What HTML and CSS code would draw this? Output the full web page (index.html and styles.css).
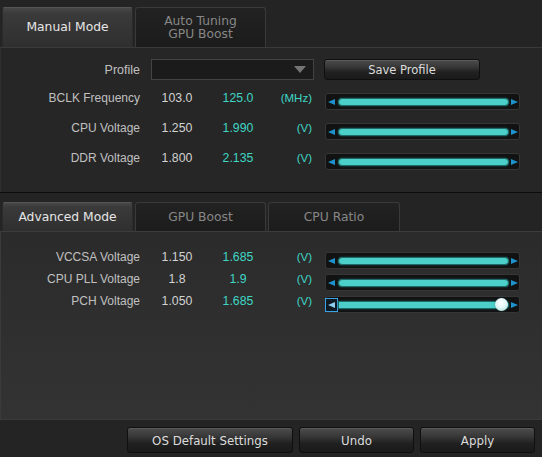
FILE: index.html
```html
<!DOCTYPE html>
<html>
<head>
<meta charset="utf-8">
<link rel="stylesheet" href="styles.css">
</head>
<body>
<div class="app">
  <div class="tabs tabs-top">
    <div class="tab tab-big active">Manual Mode</div>
    <div class="tab tab-big two">Auto Tuning<br>GPU Boost</div>
  </div>

  <div class="panel-top">
    <div class="profile-row">
      <div class="label">Profile</div>
      <div class="dropdown"><span class="caret"></span></div>
      <div class="btn btn-save">Save Profile</div>
    </div>

    <div class="row">
      <div class="label">BCLK Frequency</div>
      <div class="val">103.0</div>
      <div class="val teal">125.0</div>
      <div class="unit">(MHz)</div>
      <div class="slider"><span class="arr-l"></span><span class="track"></span><span class="arr-r"></span></div>
    </div>
    <div class="row">
      <div class="label">CPU Voltage</div>
      <div class="val">1.250</div>
      <div class="val teal">1.990</div>
      <div class="unit">(V)</div>
      <div class="slider"><span class="arr-l"></span><span class="track"></span><span class="arr-r"></span></div>
    </div>
    <div class="row">
      <div class="label">DDR Voltage</div>
      <div class="val">1.800</div>
      <div class="val teal">2.135</div>
      <div class="unit">(V)</div>
      <div class="slider"><span class="arr-l"></span><span class="track"></span><span class="arr-r"></span></div>
    </div>
  </div>

  <div class="divider"></div>

  <div class="tabs tabs-bottom">
    <div class="tab tab-small active">Advanced Mode</div>
    <div class="tab tab-small">GPU Boost</div>
    <div class="tab tab-small wide">CPU Ratio</div>
  </div>

  <div class="panel-bottom">
    <div class="row row-sm">
      <div class="label">VCCSA Voltage</div>
      <div class="val">1.150</div>
      <div class="val teal">1.685</div>
      <div class="unit">(V)</div>
      <div class="slider"><span class="arr-l"></span><span class="track"></span><span class="arr-r"></span></div>
    </div>
    <div class="row row-sm">
      <div class="label">CPU PLL Voltage</div>
      <div class="val">1.8</div>
      <div class="val teal">1.9</div>
      <div class="unit">(V)</div>
      <div class="slider"><span class="arr-l"></span><span class="track"></span><span class="arr-r"></span></div>
    </div>
    <div class="row row-sm">
      <div class="label">PCH Voltage</div>
      <div class="val">1.050</div>
      <div class="val teal">1.685</div>
      <div class="unit">(V)</div>
      <div class="slider focused"><span class="arr-box"><span class="arr-l light"></span></span><span class="track"><span class="thumb"></span></span><span class="arr-r"></span></div>
    </div>
  </div>

  <div class="footer">
    <div class="btn btn-foot btn-os">OS Default Settings</div>
    <div class="btn btn-foot">Undo</div>
    <div class="btn btn-foot">Apply</div>
  </div>
</div>
</body>
</html>
```

FILE: styles.css
```css
* { box-sizing: border-box; }
html, body { margin: 0; padding: 0; }
body {
  width: 542px;
  height: 457px;
  background: #242424;
  overflow: hidden;
  font-family: "Liberation Sans", Arial, sans-serif;
  font-size: 12px;
}
.app { width: 542px; height: 457px; display: flex; flex-direction: column; }

/* tabs */
.tabs { display: flex; gap: 2px; flex: none; }
.tabs-top { padding: 7px 0 0 2px; height: 47px; }
.tabs-bottom { padding: 9px 0 0 2px; height: 38px; }
.tab {
  width: 131px;
  display: flex;
  align-items: center;
  justify-content: center;
  text-align: center;
  font-family: "DejaVu Sans", Verdana, sans-serif;
  color: #878787;
  background: linear-gradient(#222 0%, #1c1c1c 100%);
  border: 1px solid #3a3a3a;
  border-bottom: none;
  border-radius: 3px 3px 0 0;
}
.tab-big { height: 40px; font-size: 12.3px; line-height: 13px; }
.tab-small { height: 29px; font-size: 12.3px; }
.tab.wide { width: 132px; }
.tab.active {
  color: #e6e6e6;
  background: linear-gradient(#474747 0%, #3a3a3a 15%, #2f2f2f 100%);
  border-color: #555 #2a2a2a transparent #2a2a2a;
}

/* panels */
.panel-top {
  flex: none;
  height: 145px;
  border-top: 1px solid #3a3a3a;
  border-left: 1px solid #2e2e2e;
  background: #262626;
  padding-top: 11px;
}
.divider { height: 1px; flex: none; background: #0c0c0c; }
.panel-bottom {
  flex: none;
  height: 189px;
  border-top: 1px solid #3c3c3c;
  border-bottom: 1px solid #3a3a3a;
  border-left: 1px solid #3a3a3a;
  background: linear-gradient(#2b2b2b, #333333);
  padding-top: 17px;
}

/* profile row */
.profile-row { display: flex; align-items: center; height: 21px; margin-bottom: 10px; }
.label {
  width: 139px;
  flex: none;
  text-align: right;
  color: #c0c0c0;
  line-height: 16px;
}
.profile-row .label { font-size: 12.5px; }
.dropdown {
  margin-left: 11px;
  width: 163px;
  height: 21px;
  background: #1b1b1b;
  border: 1px solid #434343;
  display: flex;
  justify-content: flex-end;
  align-items: center;
  padding-right: 7px;
}
.caret {
  width: 0; height: 0;
  border-left: 6px solid transparent;
  border-right: 6px solid transparent;
  border-top: 7px solid #747474;
}

.btn {
  display: flex;
  align-items: center;
  justify-content: center;
  font-family: "DejaVu Sans", Verdana, sans-serif;
  font-size: 11.5px;
  color: #dcdcdc;
  background: linear-gradient(#4c4c4c 0%, #383838 35%, #202020 65%, #1a1a1a 100%);
  border: 1px solid #0f0f0f;
  border-radius: 3px;
  box-shadow: inset 0 1px 0 #5a5a5a;
}
.btn-save { margin-left: 10px; width: 156px; height: 21px; }

/* rows */
.row { display: flex; align-items: flex-start; height: 30px; }
.row-sm { height: 22px; }
.val {
  width: 52px;
  flex: none;
  text-align: center;
  color: #d2d2d2;
  line-height: 16px;
  font-size: 12.3px;
}
.row .val:nth-child(2) { margin-left: 11px; }
.row .val:nth-child(3) { margin-left: 9px; }
.teal { color: #3ed6c4; }
.unit {
  width: 48px;
  flex: none;
  text-align: right;
  color: #3ed6c4;
  line-height: 16px;
  font-size: 11.5px;
}

/* slider */
.slider {
  margin-left: 13px;
  margin-top: 3px;
  width: 195px;
  height: 17px;
  flex: none;
  background: #121212;
  border: 1px solid #363636;
  border-radius: 3px;
  display: flex;
  align-items: center;
  padding: 0 1px 0 2px;
}
.arr-l {
  width: 0; height: 0; flex: none;
  border-top: 3.5px solid transparent;
  border-bottom: 3.5px solid transparent;
  border-right: 7px solid #1d92cc;
}
.arr-r {
  width: 0; height: 0; flex: none;
  border-top: 3.5px solid transparent;
  border-bottom: 3.5px solid transparent;
  border-left: 7px solid #1d92cc;
}
.track {
  flex: 1;
  height: 8px;
  margin: 0 2px 0 3px;
  background: #4dcfc9;
  border: 1px solid #1c6a6a;
  border-radius: 4px;
  box-shadow: 0 0 2px #1a5c5c;
  position: relative;
}
.slider.focused { padding-left: 0; }
.arr-box {
  flex: none;
  width: 13px;
  height: 14px;
  margin-left: -1px;
  border: 1px solid #3aa2e6;
  background: #0f1a22;
  display: flex;
  align-items: center;
  justify-content: center;
}
.arr-l.light { border-right-color: #8fcff2; }
.slider.focused .track { margin-left: 0; border-radius: 0 4px 4px 0; }
.thumb {
  position: absolute;
  right: 0;
  top: 50%;
  width: 13px;
  height: 13px;
  margin-top: -6.5px;
  border-radius: 50%;
  background: radial-gradient(circle at 45% 35%, #ffffff 0%, #e4f6f6 45%, #9cd9d6 100%);
  box-shadow: 0 0 1px #2a6a6a;
}

/* footer */
.footer {
  flex: 1;
  display: flex;
  justify-content: flex-end;
  gap: 6px;
  padding: 7px 7px 0 0;
}
.btn-foot { width: 115px; height: 26px; font-size: 11.8px; padding-top: 2px; }
.btn-os { width: 166px; }
```
